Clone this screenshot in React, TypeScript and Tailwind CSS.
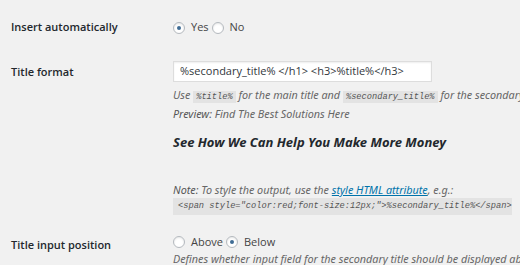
import React from 'react';

const sans = { fontFamily: '"Open Sans", "Noto Sans", sans-serif' };
const ital = { fontFamily: '"Noto Sans", "Open Sans", sans-serif' };
const mono = { fontFamily: '"Liberation Mono", "DejaVu Sans Mono", monospace' };

function Radio({ checked }: { checked?: boolean }) {
  return (
    <span className="inline-flex h-[12px] w-[12px] items-center justify-center rounded-full border border-[#b4b9be] bg-white shadow-[inset_0_1px_2px_rgba(0,0,0,0.1)]">
      {checked && <span className="h-[4px] w-[4px] rounded-full bg-[#3f6c94]" />}
    </span>
  );
}

function Code({ children }: { children: React.ReactNode }) {
  return (
    <code className="bg-[#e3e3e3] px-[3px] py-[1px] text-[8.7px] italic text-[#555]" style={mono}>
      {children}
    </code>
  );
}

export default function App() {
  return (
    <div className="h-[265px] w-[520px] overflow-hidden bg-[#f1f1f1] text-[11px] text-[#23282d]" style={sans}>
      {/* Insert automatically */}
      <div className="flex h-[54px] items-center pt-[1px]">
        <div className="w-[173px] pl-[11px] font-semibold">Insert automatically</div>
        <div className="flex items-center text-[#444]">
          <Radio checked />
          <span className="ml-[6px] mr-[3px]">Yes</span>
          <Radio />
          <span className="ml-[6px]">No</span>
        </div>
      </div>

      {/* Title format */}
      <div className="mt-[7px] flex">
        <div className="w-[173px] pl-[11px] pt-[3px] font-semibold">Title format</div>
        <div className="min-w-0 flex-1">
          <div className="flex h-[21px] w-[259px] items-center border border-[#ddd] bg-white pl-[6px] text-[#32373c] shadow-[inset_0_1px_2px_rgba(0,0,0,0.07)]">
            %secondary_title% &lt;/h1&gt; &lt;h3&gt;%title%&lt;/h3&gt;
          </div>
          <div className="mt-[4px] whitespace-nowrap text-[10.8px] italic leading-[18px] text-[#666]" style={ital}>
            Use <Code>%title%</Code> for the main title and <Code>%secondary_title%</Code> for the secondary title.
          </div>
          <div className="whitespace-nowrap text-[10.8px] italic leading-[15px] text-[#666]" style={ital}>
            <span className="text-[#555]">Preview:</span> Find The Best Solutions Here
          </div>
          <div className="mt-[12px] whitespace-nowrap text-[13px] font-bold italic leading-[18px] text-[#23282d]" style={ital}>
            See How We Can Help You Make More Money
          </div>
          <div className="mt-[31px] whitespace-nowrap text-[10.8px] italic leading-[16px] text-[#666]" style={ital}>
            <span className="text-[#555]">Note:</span> To style the output, use the{' '}
            <span className="text-[#0073aa] underline">style HTML attribute</span>, e.g.:
          </div>
          <div className="flex h-[17px] w-[339px] items-center whitespace-nowrap bg-[#e3e3e3] pl-[5px] text-[8.7px] italic text-[#555]" style={mono}>
            &lt;span style="color:red;font-size:12px;"&gt;%secondary_title%&lt;/span&gt;
          </div>
        </div>
      </div>

      {/* Title input position */}
      <div className="mt-[18px] flex">
        <div className="w-[173px] pl-[11px] pt-[4px] font-semibold">Title input position</div>
        <div className="min-w-0 flex-1">
          <div className="flex items-center leading-[18px] text-[#444]">
            <Radio />
            <span className="ml-[6px] mr-[3px]">Above</span>
            <Radio checked />
            <span className="ml-[6px]">Below</span>
          </div>
          <div className="whitespace-nowrap text-[10.8px] italic leading-[16px] text-[#666]" style={ital}>
            Defines whether input field for the secondary title should be displayed above or below the main title.
          </div>
        </div>
      </div>
    </div>
  );
}
